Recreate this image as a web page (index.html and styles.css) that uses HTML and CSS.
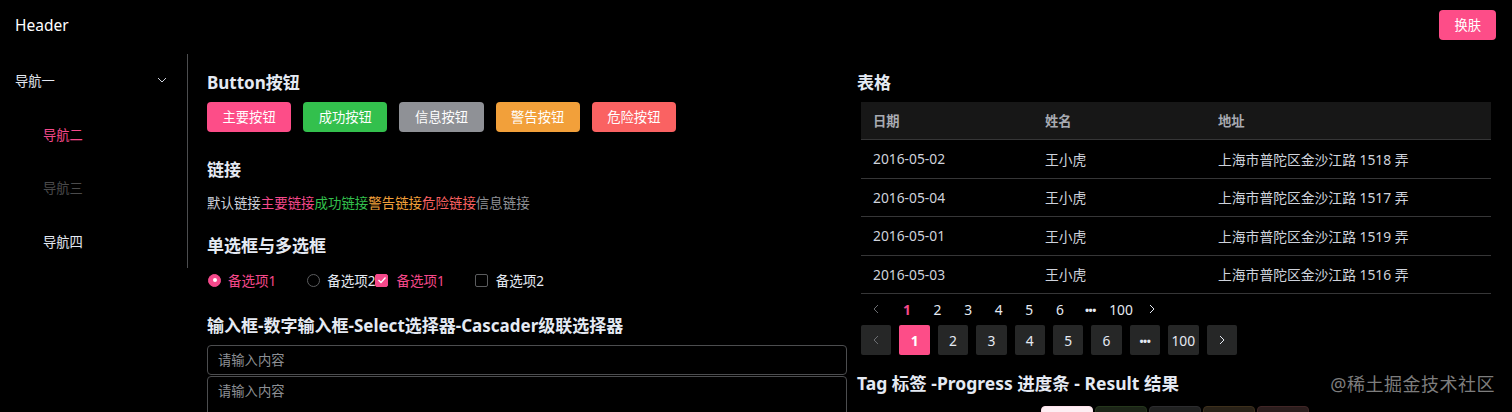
FILE: index.html
```html
<!DOCTYPE html>
<html lang="zh-CN">
<head>
<meta charset="utf-8">
<title>Theme Demo</title>
<link rel="stylesheet" href="styles.css">
</head>
<body>
<header class="header">
  <span class="header-title">Header</span>
  <button class="btn btn-primary skin-btn">换肤</button>
</header>
<div class="layout">
  <aside class="sidebar">
    <div class="menu-item submenu-title">
      <span>导航一</span>
      <svg class="chevron" width="10" height="6" viewBox="0 0 10 6"><path d="M1 1l4 4 4-4" fill="none" stroke="#cfd3dc" stroke-width="1"/></svg>
    </div>
    <div class="menu-item sub active">导航二</div>
    <div class="menu-item sub disabled">导航三</div>
    <div class="menu-item sub">导航四</div>
  </aside>
  <main class="main">
    <section class="col col-left">
      <h3 class="title">Button按钮</h3>
      <div class="btn-row sec-buttons">
        <button class="btn btn-primary">主要按钮</button>
        <button class="btn btn-success">成功按钮</button>
        <button class="btn btn-info">信息按钮</button>
        <button class="btn btn-warning">警告按钮</button>
        <button class="btn btn-danger">危险按钮</button>
      </div>
      <h3 class="title">链接</h3>
      <div class="links sec-links">
        <a class="link">默认链接</a><a class="link l-primary">主要链接</a><a class="link l-success">成功链接</a><a class="link l-warning">警告链接</a><a class="link l-danger">危险链接</a><a class="link l-info">信息链接</a>
      </div>
      <h3 class="title">单选框与多选框</h3>
      <div class="choice-row sec-choice">
        <label class="radio checked"><span class="radio-icon"></span><span class="choice-label">备选项1</span></label>
        <label class="radio last"><span class="radio-icon"></span><span class="choice-label">备选项2</span></label>
        <label class="checkbox checked"><span class="check-icon"><svg width="10" height="8" viewBox="0 0 10 8"><path d="M1.5 4l2.5 2.5 4.5-5" fill="none" stroke="#fff" stroke-width="1.3"/></svg></span><span class="choice-label">备选项1</span></label>
        <label class="checkbox"><span class="check-icon"></span><span class="choice-label">备选项2</span></label>
      </div>
      <h3 class="title">输入框-数字输入框-Select选择器-Cascader级联选择器</h3>
      <input class="input" type="text" placeholder="请输入内容">
      <textarea class="textarea" placeholder="请输入内容"></textarea>
    </section>
    <section class="col col-right">
      <h3 class="title">表格</h3>
      <div class="table">
        <div class="tr th"><div class="td">日期</div><div class="td">姓名</div><div class="td">地址</div></div>
        <div class="tr"><div class="td">2016-05-02</div><div class="td">王小虎</div><div class="td">上海市普陀区金沙江路 1518 弄</div></div>
        <div class="tr"><div class="td">2016-05-04</div><div class="td">王小虎</div><div class="td">上海市普陀区金沙江路 1517 弄</div></div>
        <div class="tr"><div class="td">2016-05-01</div><div class="td">王小虎</div><div class="td">上海市普陀区金沙江路 1519 弄</div></div>
        <div class="tr"><div class="td">2016-05-03</div><div class="td">王小虎</div><div class="td">上海市普陀区金沙江路 1516 弄</div></div>
      </div>
      <div class="pager">
        <span class="pg disabled"><svg width="6" height="10" viewBox="0 0 6 10"><path d="M5 1L1 5l4 4" fill="none" stroke="currentColor" stroke-width="1"/></svg></span>
        <span class="pg active">1</span><span class="pg">2</span><span class="pg">3</span><span class="pg">4</span><span class="pg">5</span><span class="pg">6</span><span class="pg more">•••</span><span class="pg">100</span>
        <span class="pg"><svg width="6" height="10" viewBox="0 0 6 10"><path d="M1 1l4 4-4 4" fill="none" stroke="currentColor" stroke-width="1"/></svg></span>
      </div>
      <div class="pager pager-bg">
        <span class="pg disabled"><svg width="6" height="10" viewBox="0 0 6 10"><path d="M5 1L1 5l4 4" fill="none" stroke="currentColor" stroke-width="1"/></svg></span>
        <span class="pg active">1</span><span class="pg">2</span><span class="pg">3</span><span class="pg">4</span><span class="pg">5</span><span class="pg">6</span><span class="pg more">•••</span><span class="pg">100</span>
        <span class="pg"><svg width="6" height="10" viewBox="0 0 6 10"><path d="M1 1l4 4-4 4" fill="none" stroke="currentColor" stroke-width="1"/></svg></span>
      </div>
      <h3 class="title title-tag">Tag 标签 -Progress 进度条 - Result 结果</h3>
      <div class="tags">
        <span class="tag t-primary"></span>
        <span class="tag t-success"></span>
        <span class="tag t-info"></span>
        <span class="tag t-warning"></span>
        <span class="tag t-danger"></span>
      </div>
    </section>
  </main>
</div>
<div class="watermark">@稀土掘金技术社区</div>
</body>
</html>
```

FILE: styles.css
```css
html, body {
  margin: 0;
  padding: 0;
  background: #000;
  overflow: hidden;
  height: 412px;
}
body {
  font-family: "Noto Sans", "Noto Sans CJK SC", sans-serif;
  font-size: 13.3px;
  color: #cfd3dc;
  position: relative;
}
.header {
  height: 54px;
  display: flex;
  align-items: center;
  justify-content: space-between;
  padding: 0 16px 0 15px;
  box-sizing: border-box;
}
.header-title {
  font-size: 15.5px;
  color: #fff;
  margin-top: -4px;
}
.btn {
  border: none;
  border-radius: 4px;
  height: 30px;
  padding: 0 15.5px;
  font-family: inherit;
  font-size: 13.3px;
  color: #fff;
  line-height: 30px;
  cursor: pointer;
}
.skin-btn {
  margin-top: -4px;
  padding: 0 15px;
}
.btn-primary { background: #fd4d88; }
.btn-success { background: #33c04d; }
.btn-info { background: #8f9196; }
.btn-warning { background: #f2a03a; }
.btn-danger { background: #fa6262; }

.layout {
  display: flex;
  align-items: flex-start;
}
.sidebar {
  width: 187px;
  height: 214px;
  border-right: 1px solid #4c4d4f;
  flex-shrink: 0;
}
.menu-item {
  height: 53.5px;
  display: flex;
  align-items: center;
  padding-left: 15px;
  color: #e5eaf3;
  font-size: 13.3px;
}
.submenu-title {
  justify-content: space-between;
  padding-right: 20px;
}
.chevron { margin-top: -2px; }
.menu-item.sub { padding-left: 43px; }
.menu-item.active { color: #f5498b; }
.menu-item.disabled { color: #4a4a4b; }

.main {
  flex: 1;
  display: grid;
  grid-template-columns: 640px 1fr;
  column-gap: 10px;
  padding: 17px 20px 0 19px;
}
.col { display: flex; flex-direction: column; }
.title {
  margin: 0 0 7px;
  font-size: 17px;
  line-height: 24px;
  font-weight: 700;
  color: #e5eaf3;
}
.btn-row {
  display: flex;
  gap: 12px;
}
.sec-buttons { margin-bottom: 26px; }
.links {
  height: 28px;
  line-height: 28px;
  white-space: nowrap;
  font-size: 13.45px;
}
.sec-links { margin-bottom: 17px; }
.link { color: #cfd3dc; }
.l-primary { color: #f5498b; }
.l-success { color: #33c04d; }
.l-warning { color: #f2a03a; }
.l-danger { color: #fa6262; }
.l-info { color: #8f9196; }

.choice-row {
  display: flex;
  align-items: center;
  height: 30px;
}
.sec-choice { margin-bottom: 19px; }
.radio, .checkbox {
  display: flex;
  align-items: center;
  margin-right: 30px;
  color: #e5eaf3;
}
.radio.last { margin-right: 0; }
.choice-label { padding-left: 7px; }
.radio .choice-label { font-size: 13.5px; }
.checkbox .choice-label { padding-left: 8px; font-size: 13.5px; }
.radio.checked .choice-label,
.checkbox.checked .choice-label { color: #f5498b; }
.radio-icon {
  width: 13px;
  height: 13px;
  border: 1px solid #5b5c5e;
  border-radius: 50%;
  box-sizing: border-box;
  display: flex;
  align-items: center;
  justify-content: center;
  margin-left: 1px;
}
.radio.checked .radio-icon {
  background: #f5498b;
  border-color: #f5498b;
}
.radio.checked .radio-icon::after {
  content: "";
  width: 4px;
  height: 4px;
  border-radius: 50%;
  background: #fff;
}
.check-icon {
  width: 13px;
  height: 13px;
  border: 1px solid #5b5c5e;
  border-radius: 2px;
  box-sizing: border-box;
  display: flex;
  align-items: center;
  justify-content: center;
}
.checkbox.checked .check-icon {
  background: #f5498b;
  border-color: #f5498b;
}

.input, .textarea {
  width: 640px;
  box-sizing: border-box;
  background: #000;
  border: 1px solid #4c4d4f;
  border-radius: 4px;
  font-family: inherit;
  font-size: 13.3px;
  color: #cfd3dc;
  padding: 0 10px;
  outline: none;
}
.input { height: 30px; }
.textarea {
  margin-top: 1px;
  height: 60px;
  padding-top: 4px;
  resize: none;
}
.input::placeholder, .textarea::placeholder { color: #8d9095; }

.table {
  margin-left: 4px;
  width: 630px;
  font-size: 13.8px;
}
.tr {
  display: grid;
  grid-template-columns: 172px 173px 1fr;
  height: 38.5px;
  align-items: center;
  border-bottom: 1px solid #363637;
  box-sizing: border-box;
}
.th {
  height: 38px;
  background: #171717;
  color: #a8abb2;
  font-weight: 700;
  font-size: 13.3px;
}
.td { padding-left: 12px; }

.pager {
  display: flex;
  margin-left: 4px;
  height: 30px;
  align-items: center;
  font-size: 13.8px;
  color: #e5eaf3;
}
.pg {
  width: 30.6px;
  height: 30px;
  display: flex;
  align-items: center;
  justify-content: center;
}
.pg.active { color: #f5498b; font-weight: 700; }
.pg.disabled { color: #6c6e72; }
.pg.more { font-size: 11px; letter-spacing: -0.5px; font-weight: 700; }
.pager-bg {
  margin-top: 1px;
  gap: 8px;
}
.pager-bg .pg {
  width: 30.4px;
  background: #262727;
  border-radius: 2px;
}
.pager-bg .pg.active {
  background: #fd4d88;
  color: #fff;
}
.title-tag { margin-top: 16px; margin-bottom: 11px; font-size: 17.5px; }

.tags {
  display: flex;
  justify-content: center;
  gap: 2px;
}
.tag {
  width: 52px;
  height: 23px;
  border-radius: 4px;
  box-sizing: border-box;
  border: 1px solid transparent;
}
.t-primary { background: #fdeef3; border-color: #fde0ea; }
.t-success { background: #1c2518; border-color: #25371c; }
.t-info { background: #202121; border-color: #2d2d2f; }
.t-warning { background: #292218; border-color: #3e301c; }
.t-danger { background: #2b1d1d; border-color: #412626; }

.watermark {
  position: absolute;
  right: 17px;
  top: 370px;
  font-size: 18px;
  color: #7d7d7d;
  letter-spacing: 0.5px;
}
```
